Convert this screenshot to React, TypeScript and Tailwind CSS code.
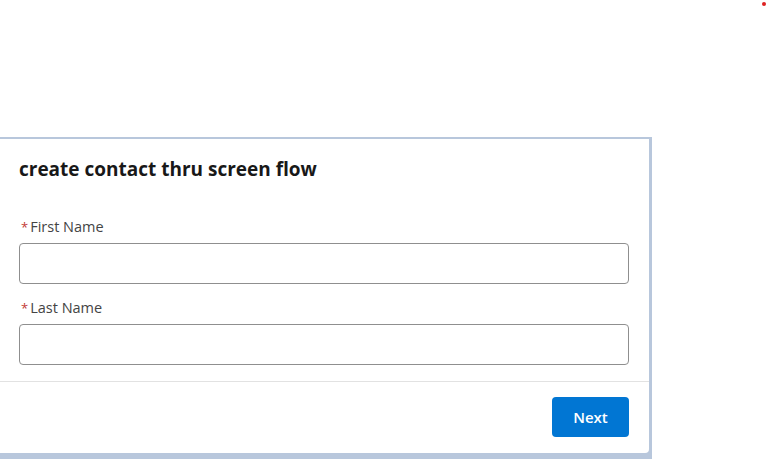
export default function App() {
  return (
    <div className="relative h-[459px] w-[768px] overflow-hidden bg-white font-['Open_Sans',sans-serif]">
      <span className="absolute right-[2px] top-[2px] h-[4px] w-[4px] rounded-full bg-[#d22]" />
      <div className="pt-[137px]">
        <div className="h-[322px] w-[652px] bg-[#b8c7dc] pt-[2px] pr-[3px] pb-[6px]">
          <div className="flex h-full flex-col rounded-br-[4px] bg-white">
            <div className="px-[19px] pt-[16px]">
              <h1 className="text-[19px] font-bold leading-[28px] text-[#181818]">
                create contact thru screen flow
              </h1>
              <div className="mt-[34px] flex flex-col gap-[14px]">
                <Field label="First Name" />
                <Field label="Last Name" />
              </div>
            </div>
            <div className="mt-[16px] flex flex-1 items-start justify-end border-t border-[#e2e2e2] px-[20px] pt-[15px]">
              <button className="h-[40px] w-[77px] rounded-[4px] bg-[#0176d3] text-[15px] font-semibold text-white">
                Next
              </button>
            </div>
          </div>
        </div>
      </div>
    </div>
  );
}

function Field({ label }: { label: string }) {
  return (
    <div>
      <label className="flex items-center text-[14.5px] leading-[20px] text-[#444444]">
        <span className="mr-[2px] ml-[2px] text-[13px] text-[#c23934]">*</span>
        {label}
      </label>
      <input className="mt-[6px] block h-[41px] w-[610px] rounded-[4px] border border-[#8f8f8f] bg-white px-3" />
    </div>
  );
}
